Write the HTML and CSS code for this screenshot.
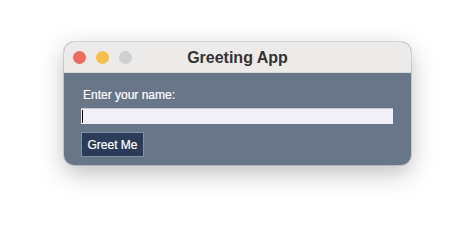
FILE: index.html
```html
<!DOCTYPE html>
<html>
<head>
<meta charset="utf-8">
<link rel="stylesheet" href="styles.css">
</head>
<body>
<div class="window">
  <div class="titlebar">
    <div class="lights">
      <span class="light red"></span>
      <span class="light yellow"></span>
      <span class="light gray"></span>
    </div>
    <div class="title">Greeting App</div>
  </div>
  <div class="content">
    <div class="label">Enter your name:</div>
    <div class="input"><span class="caret"></span></div>
    <div class="button">Greet Me</div>
  </div>
</div>
</body>
</html>
```
FILE: styles.css
```css
html, body {
  margin: 0;
  padding: 0;
  background: #ffffff;
  width: 474px;
  height: 250px;
  overflow: hidden;
}
body {
  font-family: "Liberation Sans", Arial, sans-serif;
  padding: 42px 0 0 64px;
  box-sizing: border-box;
}
.window {
  width: 347px;
  height: 123px;
  border-radius: 10px;
  overflow: hidden;
  background: #687688;
  box-shadow: 0 0 0 1px rgba(0,0,0,0.12), 0 8px 24px rgba(0,0,0,0.26);
  display: flex;
  flex-direction: column;
}
.titlebar {
  height: 30px;
  background: #ecebea;
  border-bottom: 1px solid #d8d8d8;
  position: relative;
  display: flex;
  align-items: center;
  flex-shrink: 0;
}
.lights {
  display: flex;
  gap: 10px;
  padding-left: 9px;
}
.light {
  width: 13px;
  height: 13px;
  border-radius: 50%;
  display: block;
}
.red { background: #ec6a5e; }
.yellow { background: #f4bf4f; }
.gray { background: #d0d0d0; }
.title {
  position: absolute;
  left: 0;
  right: 0;
  top: 1px;
  bottom: 0;
  display: flex;
  align-items: center;
  justify-content: center;
  font-weight: bold;
  font-size: 16px;
  color: #333333;
  padding-left: 0;
}
.content {
  padding: 14px 0 0 17px;
  display: flex;
  flex-direction: column;
  align-items: flex-start;
}
.label {
  color: #ffffff;
  font-size: 12px;
  line-height: 16px;
  margin-left: 2px;
  -webkit-text-stroke: 0.2px #ffffff;
}
.input {
  margin-top: 5px;
  width: 312px;
  height: 16px;
  box-sizing: border-box;
  background: #f1f0f8;
  border-top: 1px solid #c8c8d0;
  position: relative;
}
.caret {
  position: absolute;
  left: 1px;
  top: 1px;
  width: 1px;
  height: 13px;
  background: #000000;
}
.button {
  margin-top: 8px;
  width: 63px;
  height: 25px;
  box-sizing: border-box;
  background: #2d3b5a;
  border: 1px solid #8290a6;
  color: #ffffff;
  font-size: 12px;
  -webkit-text-stroke: 0.2px #ffffff;
  display: flex;
  align-items: center;
  justify-content: center;
}
```
